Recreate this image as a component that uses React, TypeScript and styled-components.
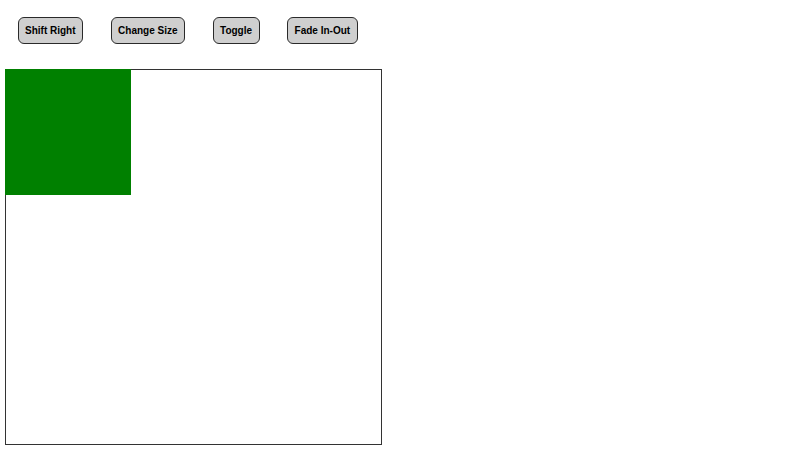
import React from 'react';
import styled, { createGlobalStyle } from 'styled-components';

const GlobalStyle = createGlobalStyle`
  body {
    margin: 0;
    background: #ffffff;
    font-family: "Liberation Sans", Arial, sans-serif;
  }
`;

const Page = styled.div`
  display: flex;
  flex-direction: column;
  align-items: flex-start;
`;

const Toolbar = styled.div`
  display: flex;
  gap: 27.5px;
  padding: 17px 0 0 17.5px;
`;

const Button = styled.button`
  height: 27px;
  padding: 0 6.5px;
  border: 1.5px solid #2a2a2a;
  border-radius: 6px;
  background: #cfcfcf;
  color: #000;
  font-family: "Liberation Sans", Arial, sans-serif;
  font-weight: bold;
  font-size: 10px;
  cursor: pointer;
`;

const Stage = styled.div`
  position: relative;
  width: 375px;
  height: 374px;
  margin: 25px 0 0 5px;
  border: 1px solid #333;
`;

const Square = styled.div`
  position: absolute;
  top: -1px;
  left: -1px;
  width: 126px;
  height: 126px;
  background: #008000;
`;

const labels = ['Shift Right', 'Change Size', 'Toggle', 'Fade In-Out'];

const App: React.FC = () => (
  <Page>
    <GlobalStyle />
    <Toolbar>
      {labels.map((l) => (
        <Button key={l}>{l}</Button>
      ))}
    </Toolbar>
    <Stage>
      <Square />
    </Stage>
  </Page>
);

export default App;
